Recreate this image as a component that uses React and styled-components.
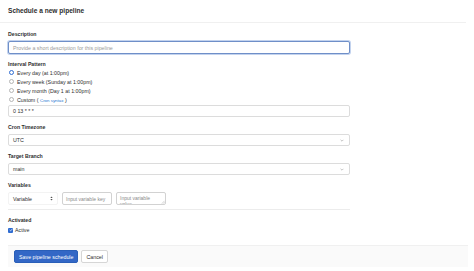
import styled, { createGlobalStyle } from "styled-components";

const GlobalStyle = createGlobalStyle`
  body {
    margin: 0;
    background: #ffffff;
    font-family: "Liberation Sans", Arial, sans-serif;
    color: #2e2e2e;
  }
`;

const Page = styled.div`
  width: 474px;
  height: 271px;
  overflow: hidden;
`;

const Header = styled.div`
  width: 466px;
  height: 23px;
  display: flex;
  align-items: center;
  padding: 0 8px;
  box-sizing: border-box;
  border-bottom: 1px solid #f0f0f0;
`;

const Title = styled.h3`
  margin: 0 0 1px;
  font-size: 6.6px;
  font-weight: bold;
  color: #2e2e2e;
`;

const Form = styled.form`
  padding: 8px 8px 0;
  margin: 0;
`;

const Fields = styled.div`
  width: 342px;
`;

const Group = styled.div`
  margin-bottom: ${(p) => p.$mb ?? 7}px;
`;

const Label = styled.div`
  font-size: 5.2px;
  line-height: 7px;
  height: 7px;
  font-weight: bold;
  color: #2e2e2e;
  margin-bottom: ${(p) => p.$mb ?? 3}px;
`;

const TextInput = styled.div`
  height: ${(p) => p.$h ?? 12}px;
  box-sizing: border-box;
  border: 1px solid ${(p) => (p.$focus ? "#6f8fc8" : "#dcdcdc")};
  box-shadow: ${(p) => (p.$focus ? "0 0 0 1px #c3d3ee" : "none")};
  border-radius: 2px;
  padding: 0 4px;
  display: flex;
  align-items: center;
  font-size: 5.3px;
  color: ${(p) => (p.$placeholder ? "#9a9a9a" : "#2e2e2e")};
  margin-top: ${(p) => p.$mt ?? 0}px;
  background: #fff;
`;

const SelectBox = styled(TextInput)`
  justify-content: space-between;
  padding-right: 5px;
`;

const RadioList = styled.div`
  display: flex;
  flex-direction: column;
`;

const RadioRow = styled.div`
  height: 9px;
  display: flex;
  align-items: center;
  gap: 3px;
  padding-left: 1px;
  font-size: 5.3px;
  color: #2e2e2e;
`;

const RadioDot = styled.span`
  width: 5px;
  height: 5px;
  border-radius: 50%;
  box-sizing: border-box;
  border: ${(p) => (p.$on ? "1.5px solid #2f6cd1" : "0.6px solid #b5b5b5")};
  background: #fff;
`;

const Link = styled.span`
  color: #1f78d1;
  font-size: 4.4px;
`;

const VarRow = styled.div`
  display: flex;
  gap: 4px;
  padding-bottom: 4px;
  border-bottom: 1px solid #ececec;
  margin-bottom: 7px;
`;

const VarSelect = styled.div`
  width: 50px;
  height: 13px;
  box-sizing: border-box;
  border: 1px solid #f3f3f3;
  border-radius: 2px;
  display: flex;
  align-items: center;
  justify-content: space-between;
  padding: 0 4px;
  font-size: 5.3px;
  color: #2e2e2e;
`;

const VarInput = styled.div`
  width: 50px;
  height: 13px;
  box-sizing: border-box;
  border: 1px solid #d2d2d2;
  border-radius: 2px;
  display: flex;
  align-items: center;
  padding: 0 3px;
  font-size: 5px;
  color: #8a8a8a;
`;

const VarArea = styled.div`
  width: 50px;
  height: 13px;
  box-sizing: border-box;
  border: 1px solid #d2d2d2;
  border-radius: 2px;
  padding: 2px 10px 0 3px;
  font-size: 5px;
  line-height: 6px;
  color: #8a8a8a;
  overflow: hidden;
  position: relative;
`;

const Grip = styled.svg`
  position: absolute;
  right: 0;
  bottom: 0;
`;

const CheckRow = styled.div`
  height: 8px;
  display: flex;
  align-items: center;
  gap: 2px;
  font-size: 5.3px;
  color: #2e2e2e;
`;

const CheckBox = styled.span`
  width: 5px;
  height: 5px;
  border-radius: 1px;
  background: #2f6cd1;
  display: flex;
  align-items: center;
  justify-content: center;
`;

const Footer = styled.div`
  margin: 11px 0 0 8px;
  width: 460px;
  height: 22px;
  box-sizing: border-box;
  background: #fafafa;
  border-top: 1px solid #f0f0f0;
  display: flex;
  align-items: center;
  gap: 3px;
  padding-left: 6px;
`;

const Button = styled.button`
  height: 13px;
  box-sizing: border-box;
  border-radius: 2px;
  font-family: inherit;
  font-size: 5.3px;
  padding: 0 ${(p) => (p.$primary ? 4 : 4)}px;
  border: 1px solid ${(p) => (p.$primary ? "#2a5fb8" : "#d6d6d6")};
  background: ${(p) => (p.$primary ? "#3367c6" : "#ffffff")};
  color: ${(p) => (p.$primary ? "#ffffff" : "#2e2e2e")};
  cursor: pointer;
`;

const Chevron = () => (
  <svg width="4" height="3" viewBox="0 0 4 3">
    <path d="M0.6 0.8 L2 2.2 L3.4 0.8" fill="none" stroke="#9a9a9a" strokeWidth="0.6" />
  </svg>
);

const UpDown = () => (
  <svg width="3" height="5" viewBox="0 0 3 5">
    <path d="M0.3 2 L1.5 0.6 L2.7 2 Z M0.3 3 L1.5 4.4 L2.7 3 Z" fill="#555" />
  </svg>
);

const App = () => {
  return (
    <Page>
      <GlobalStyle />
      <Header>
        <Title>Schedule a new pipeline</Title>
      </Header>
      <Form>
        <Fields>
          <Group>
            <Label>Description</Label>
            <TextInput $h={13} $focus $placeholder>
              Provide a short description for this pipeline
            </TextInput>
          </Group>

          <Group>
            <Label $mb={0}>Interval Pattern</Label>
            <RadioList>
              <RadioRow><RadioDot $on /><span>Every day (at 1:00pm)</span></RadioRow>
              <RadioRow><RadioDot /><span>Every week (Sunday at 1:00pm)</span></RadioRow>
              <RadioRow><RadioDot /><span>Every month (Day 1 at 1:00pm)</span></RadioRow>
              <RadioRow>
                <RadioDot />
                <span>Custom ( <Link>Cron syntax</Link> )</span>
              </RadioRow>
            </RadioList>
            <TextInput $mt={1}>0 13 * * *</TextInput>
          </Group>

          <Group>
            <Label>Cron Timezone</Label>
            <SelectBox>UTC<Chevron /></SelectBox>
          </Group>

          <Group>
            <Label>Target Branch</Label>
            <SelectBox>main<Chevron /></SelectBox>
          </Group>

          <Group $mb={0}>
            <Label>Variables</Label>
            <VarRow>
              <VarSelect>Variable<UpDown /></VarSelect>
              <VarInput>Input variable key</VarInput>
              <VarArea>
                Input variable value
                <Grip width="4" height="4" viewBox="0 0 4 4">
                  <path d="M3.6 0.8 L0.8 3.6 M3.6 2.2 L2.2 3.6" stroke="#999" strokeWidth="0.4" />
                </Grip>
              </VarArea>
            </VarRow>
          </Group>

          <Group $mb={0}>
            <Label $mb={2}>Activated</Label>
            <CheckRow>
              <CheckBox>
                <svg width="4" height="4" viewBox="0 0 4 4">
                  <path d="M0.7 2 L1.6 2.9 L3.3 1" fill="none" stroke="#fff" strokeWidth="0.7" />
                </svg>
              </CheckBox>
              <span>Active</span>
            </CheckRow>
          </Group>
        </Fields>
      </Form>
      <Footer>
        <Button $primary type="button">Save pipeline schedule</Button>
        <Button type="button">Cancel</Button>
      </Footer>
    </Page>
  );
};

export default App;
